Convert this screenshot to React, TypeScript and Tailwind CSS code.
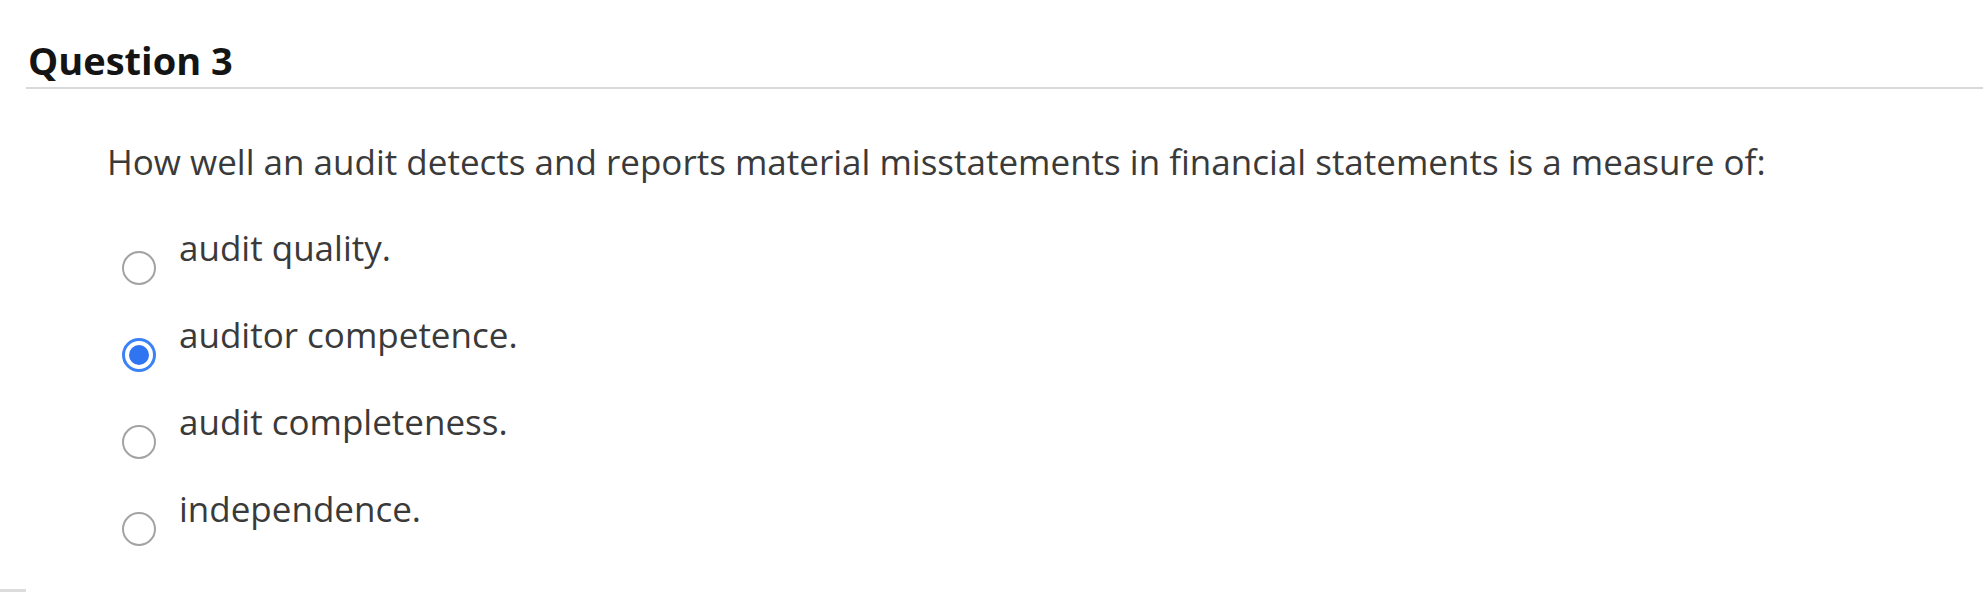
const options = [
  { label: 'audit quality.', checked: false },
  { label: 'auditor competence.', checked: true },
  { label: 'audit completeness.', checked: false },
  { label: 'independence.', checked: false },
];

const Radio = ({ checked }: { checked: boolean }) => {
  if (checked) {
    return (
      <span className="flex items-center justify-center w-[34px] h-[34px] rounded-full border-[3px] border-[#3b82f6] bg-white">
        <span className="block w-[20px] h-[20px] rounded-full bg-[#2f74f0]" />
      </span>
    );
  }
  return <span className="block w-[34px] h-[34px] rounded-full border-[2.5px] border-[#a3a3a3] bg-white" />;
};

const App = () => {
  return (
    <div className="w-full h-[600px] bg-white font-['Open_Sans',sans-serif] overflow-hidden">
      <div className="pt-[36px] ml-[26px] mr-[5px] border-b-2 border-[#d9d9d9]">
        <h2 className="pl-[2px] pb-[3px] text-[38px] leading-[48px] font-bold text-[#141414]">Question 3</h2>
      </div>

      <p className="mt-[51px] pl-[107px] text-[35px] leading-[44px] text-[#3a3a3a]">
        How well an audit detects and reports material misstatements in financial statements is a measure of:
      </p>

      <div className="mt-[42px] pl-[122px] flex flex-col">
        {options.map((opt) => (
          <label key={opt.label} className="flex h-[87px] cursor-pointer">
            <span className="mt-[25px]">
              <Radio checked={opt.checked} />
            </span>
            <span className="ml-[23px] text-[35px] leading-[44px] text-[#3a3a3a]">{opt.label}</span>
          </label>
        ))}
      </div>

      <div className="mt-[15px] w-[26px] h-[3px] bg-[#dcdcdc]" />
    </div>
  );
};

export default App;
